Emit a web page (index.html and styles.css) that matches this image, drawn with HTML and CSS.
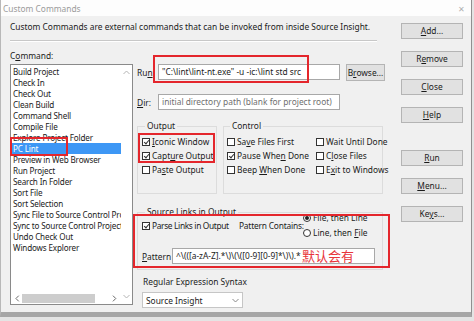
FILE: index.html
```html
<!DOCTYPE html>
<html lang="en">

<head>
    <meta charset="utf-8" />
    <title>Custom Commands</title>
    <link rel="stylesheet" href="styles.css">
</head>

<body>
    <div class="window">
        <div class="titlebar">
            <span class="title">Custom Commands</span>
            <span class="close">&#x2715;</span>
        </div>
        <div class="body">
            <div class="main">
                <p class="desc">Custom Commands are external commands that can be invoked from inside Source Insight.</p>
                <div class="sep"></div>
                <div class="split">
                    <div class="cmd-col">
                        <div class="cmd-label">C<u>o</u>mmand:</div>
                        <div class="listbox">
                            <ul class="items">
                                <li>Build Project</li>
                                <li>Check In</li>
                                <li>Check Out</li>
                                <li>Clean Build</li>
                                <li>Command Shell</li>
                                <li>Compile File</li>
                                <li>Explore Project Folder</li>
                                <li class="selected">PC Lint</li>
                                <li>Preview in Web Browser</li>
                                <li>Run Project</li>
                                <li>Search In Folder</li>
                                <li>Sort File</li>
                                <li>Sort Selection</li>
                                <li>Sync File to Source Control Project</li>
                                <li>Sync to Source Control Project</li>
                                <li>Undo Check Out</li>
                                <li>Windows Explorer</li>
                            </ul>
                            <div class="vscroll">
                                <svg width="7" height="5" viewBox="0 0 7 5"><path d="M0.5 4 L3.5 1 L6.5 4" fill="none" stroke="#b4b4b4" stroke-width="1"/></svg>
                                <svg width="7" height="5" viewBox="0 0 7 5"><path d="M0.5 1 L3.5 4 L6.5 1" fill="none" stroke="#b4b4b4" stroke-width="1"/></svg>
                            </div>
                            <div class="hscroll">
                                <svg width="5" height="7" viewBox="0 0 5 7"><path d="M4 0.5 L1 3.5 L4 6.5" fill="none" stroke="#606060" stroke-width="1"/></svg>
                                <div class="thumb"></div>
                                <svg width="5" height="7" viewBox="0 0 5 7"><path d="M1 0.5 L4 3.5 L1 6.5" fill="none" stroke="#606060" stroke-width="1"/></svg>
                            </div>
                        </div>
                    </div>

                    <div class="form-col">
                        <div class="field-row run-row">
                            <label class="field-label">Ru<u>n</u>:</label>
                            <div class="input">"C:\lint\lint-nt.exe" -u -ic:\lint std src</div>
                            <div class="btn browse">B<u>r</u>owse...</div>
                        </div>
                        <div class="field-row dir-row">
                            <label class="field-label"><u>D</u>ir:</label>
                            <div class="input placeholder">initial directory path (blank for project root)</div>
                        </div>

                        <div class="groups">
                            <fieldset class="group output">
                                <legend>Output</legend>
                                <div class="check"><span class="cb on"></span><span><u>I</u>conic Window</span></div>
                                <div class="check"><span class="cb on"></span><span>Capt<u>u</u>re Output</span></div>
                                <div class="check"><span class="cb"></span><span>Pa<u>s</u>te Output</span></div>
                            </fieldset>
                            <fieldset class="group control">
                                <legend>Control</legend>
                                <div class="check"><span class="cb"></span><span>Sa<u>v</u>e Files First</span></div>
                                <div class="check"><span class="cb"></span><span>Wait Until Done</span></div>
                                <div class="check"><span class="cb on"></span><span>Pause Whe<u>n</u> Done</span></div>
                                <div class="check"><span class="cb"></span><span>C<u>l</u>ose Files</span></div>
                                <div class="check"><span class="cb"></span><span>Beep <u>W</u>hen Done</span></div>
                                <div class="check"><span class="cb"></span><span>E<u>x</u>it to Windows</span></div>
                            </fieldset>
                        </div>

                        <fieldset class="group links">
                            <legend>Source Links in Output</legend>
                            <div class="links-top">
                                <div class="check parse"><span class="cb on"></span><span>Parse Links in Output</span></div>
                                <div class="contains">Pattern Contains:</div>
                                <div class="radios">
                                    <div class="radio"><span class="rb on"></span><span>File, then Line</span></div>
                                    <div class="radio"><span class="rb"></span><span>Line, then <u>F</u>ile</span></div>
                                </div>
                            </div>
                            <div class="pattern-row">
                                <label class="pattern-label"><u>P</u>attern</label>
                                <div class="input pattern">^\(([a-zA-Z].*\)\(\([0-9][0-9]*\)\).*</div>
                            </div>
                        </fieldset>

                        <div class="regex-label">Regular Expression Syntax</div>
                        <div class="select">
                            <span>Source Insight</span>
                            <svg width="7" height="5" viewBox="0 0 7 5"><path d="M0.5 1 L3.5 4 L6.5 1" fill="none" stroke="#8a8a8a" stroke-width="1"/></svg>
                        </div>
                    </div>
                </div>
            </div>

            <div class="buttons">
                <div class="btn"><u>A</u>dd...</div>
                <div class="btn">R<u>e</u>move</div>
                <div class="btn"><u>C</u>lose</div>
                <div class="btn"><u>H</u>elp</div>
                <div class="btn run"><u>R</u>un</div>
                <div class="btn"><u>M</u>enu...</div>
                <div class="btn">Ke<u>y</u>s...</div>
            </div>
        </div>

        <!-- annotation boxes drawn over the dialog -->
        <div class="mark mark-lint"></div>
        <div class="mark mark-run"></div>
        <div class="mark mark-output"></div>
        <div class="mark mark-links"></div>
        <div class="note">默认会有</div>
    </div>
</body>

</html>
```

FILE: styles.css
```css
html,
body {
    margin: 0;
    padding: 0;
}

body {
    width: 474px;
    height: 321px;
    overflow: hidden;
    background: #e4e4e4;
    font-family: "Noto Sans", sans-serif;
    font-size: 8.4px;
    color: #1b1b1b;
}

u {
    text-decoration-thickness: 1px;
    text-underline-offset: 1px;
}

.window {
    position: relative;
    width: 470px;
    height: 312px;
    background: #f0f0f0;
    border-left: 1px solid #b8b8b8;
    border-right: 1px solid #909090;
    border-bottom: 5px solid #a6a6a6;
}

.titlebar {
    height: 16px;
    background: #fdfdfd;
    display: flex;
    justify-content: space-between;
    align-items: center;
    padding: 0 6px 0 2px;
}

.title {
    color: #9b9b9b;
}

.close {
    color: #b0b0b0;
    font-size: 8px;
}

.body {
    display: flex;
    padding-left: 9px;
}

.main {
    width: 378px;
}

.desc {
    margin: 5px 0 0;
    line-height: 12px;
    white-space: nowrap;
}

.sep {
    width: 367px;
    margin-top: 7px;
    border-top: 1px solid #c8c8c8;
    border-bottom: 1px solid #fff;
}

.split {
    display: flex;
    margin-top: 8px;
}

/* command list */

.cmd-col {
    width: 123px;
}

.cmd-label {
    line-height: 12px;
    height: 12px;
}

.listbox {
    margin-top: 2px;
    height: 241px;
    box-sizing: border-box;
    border: 1px solid #8a8a8a;
    background: #fff;
    display: grid;
    grid-template-columns: 110px 11px;
    grid-template-rows: 1fr 12px;
}

.items {
    list-style: none;
    margin: 0;
    padding: 1px 0 0;
    overflow: hidden;
}

.items li {
    line-height: 11px;
    height: 11px;
    padding-left: 2px;
    white-space: nowrap;
    overflow: hidden;
    font-size: 8.1px;
    letter-spacing: -0.15px;
}

.items li.selected {
    background: #3d97f5;
    color: #fff;
}

.vscroll {
    grid-row: 1 / 3;
    grid-column: 2;
    display: flex;
    flex-direction: column;
    justify-content: space-between;
    align-items: center;
    padding: 5px 0 5px;
}

.hscroll {
    display: flex;
    align-items: center;
    padding: 0 4px 0 4px;
    gap: 2px;
}

.hscroll .thumb {
    width: 78px;
    height: 9px;
    background: #cdcdcd;
    margin-right: 15px;
}

/* right hand form */

.form-col {
    margin-left: 4px;
    width: 251px;
}

.field-row {
    display: flex;
    align-items: center;
    height: 16px;
}

.run-row {
    margin-top: 14px;
}

.dir-row {
    margin-top: 14px;
}

.field-label {
    width: 21px;
}

.input {
    box-sizing: border-box;
    width: 182px;
    height: 16px;
    line-height: 14px;
    padding: 0 3px;
    background: #fff;
    border: 1px solid #a8a8a8;
    white-space: nowrap;
    overflow: hidden;
}

.placeholder {
    color: #6f6f6f;
}

.btn {
    box-sizing: border-box;
    height: 16px;
    line-height: 14px;
    text-align: center;
    background: #e1e1e1;
    border: 1px solid #b4b4b4;
}

.browse {
    width: 39px;
    height: 17px;
    margin-left: 6px;
    line-height: 15px;
}

.groups {
    display: flex;
    gap: 6px;
    margin-top: 10px;
}

.group {
    box-sizing: border-box;
    margin: 0;
    padding: 0;
    border: 1px solid #dcdcdc;
    min-width: 0;
}

.group legend {
    line-height: 12px;
    margin-left: 3px;
    padding: 0 2px;
}

.output {
    width: 80px;
    height: 74px;
    padding: 3px 0 0 4px;
}

.control {
    width: 160px;
    height: 74px;
    padding: 3px 0 0 3px;
    display: grid;
    grid-template-columns: 89px 1fr;
    align-content: start;
}

.check,
.radio {
    display: flex;
    align-items: center;
    line-height: 14px;
    height: 14px;
    white-space: nowrap;
}

.cb {
    box-sizing: border-box;
    width: 8px;
    height: 8px;
    border: 1px solid #333;
    background: #fff;
    margin-right: 2px;
    flex: none;
    position: relative;
}

.cb.on::after {
    content: "";
    position: absolute;
    left: 2px;
    top: 0;
    width: 2px;
    height: 4px;
    border-right: 1px solid #333;
    border-bottom: 1px solid #333;
    transform: rotate(40deg);
}

.rb {
    box-sizing: border-box;
    width: 8px;
    height: 8px;
    border: 1px solid #333;
    border-radius: 50%;
    background: #fff;
    margin-right: 2px;
    flex: none;
    position: relative;
}

.rb.on::after {
    content: "";
    position: absolute;
    left: 1px;
    top: 1px;
    width: 4px;
    height: 4px;
    border-radius: 50%;
    background: #222;
}

.links {
    width: 246px;
    height: 64px;
    margin-top: 12px;
    padding: 0 0 0 4px;
}

.links-top {
    display: flex;
    height: 30px;
}

.parse {
    margin-top: 1px;
    width: 97px;
    flex: none;
    letter-spacing: -0.35px;
}

.contains {
    margin-top: 1px;
    line-height: 14px;
    width: 64px;
    flex: none;
    white-space: nowrap;
    letter-spacing: -0.2px;
}

.radios {
    margin-top: -8px;
}

.radio {
    line-height: 15px;
    height: 15px;
}

.pattern-row {
    display: flex;
    align-items: center;
}

.pattern-label {
    width: 30px;
}

.input.pattern {
    width: 203px;
}

.regex-label {
    margin-top: 6px;
    padding-left: 6px;
    line-height: 12px;
}

.select {
    box-sizing: border-box;
    width: 101px;
    height: 16px;
    margin: 4px 0 0 5px;
    padding: 0 3px;
    background: #fff;
    border: 1px solid #c6c6c6;
    display: flex;
    align-items: center;
    justify-content: space-between;
}

/* push buttons */

.buttons {
    margin-left: 13px;
    width: 62px;
    padding-top: 7px;
}

.buttons .btn + .btn {
    margin-top: 12px;
}

.buttons .btn.run {
    margin-top: 27px;
}

/* red annotations */

.mark {
    position: absolute;
    border: 2px solid #e4262c;
    box-sizing: border-box;
}

.mark-lint {
    left: 9px;
    top: 137px;
    width: 58px;
    height: 19px;
}

.mark-run {
    left: 152px;
    top: 55px;
    width: 156px;
    height: 28px;
}

.mark-output {
    left: 137px;
    top: 133px;
    width: 77px;
    height: 30px;
}

.mark-links {
    left: 132px;
    top: 214px;
    width: 257px;
    height: 54px;
}

.note {
    position: absolute;
    left: 301px;
    top: 247px;
    font-family: "Noto Sans CJK SC", sans-serif;
    font-size: 13px;
    line-height: 17px;
    color: #e8353b;
}
```
